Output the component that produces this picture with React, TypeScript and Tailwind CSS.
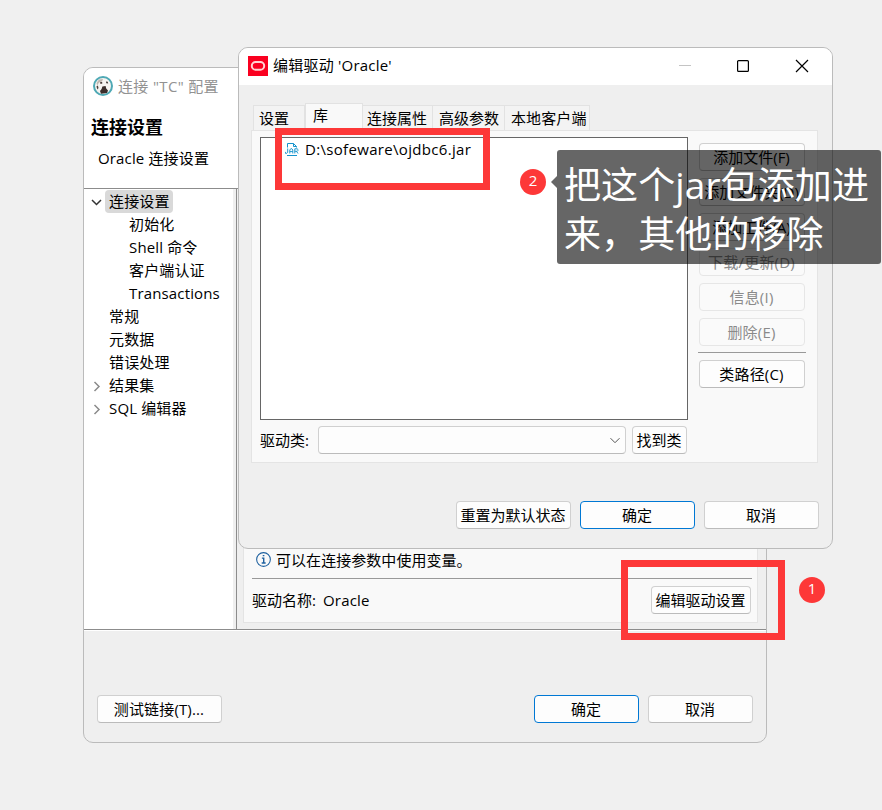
import React from "react";

const font = "font-['Open_Sans','Noto_Sans_CJK_SC',sans-serif]";

function Button({ children, className = "", variant = "normal" }: { children: React.ReactNode; className?: string; variant?: "normal" | "primary" | "disabled" }) {
  const look =
    variant === "primary"
      ? "border-[#0078d4] bg-[#fdfdfd] text-black"
      : variant === "disabled"
        ? "border-[#e6e6e6] bg-[#fafafa] text-[#8a8a8a]"
        : "border-[#d0d0d0] border-b-[#bbbbbb] bg-[#fdfdfd] text-black";
  return (
    <button className={`flex h-7 shrink-0 items-center justify-center whitespace-nowrap rounded border pr-px text-[15px] leading-none ${look} ${className}`}>
      {children}
    </button>
  );
}

function BeaverIcon() {
  return (
    <svg width="20" height="20" viewBox="0 0 20 20" className="shrink-0">
      <circle cx="10" cy="10" r="9" fill="#f6f3f0" stroke="#4fa9b5" strokeWidth="2" />
      <path d="M3.5 7 L6 3.6 L10 3 L9 5.6 L6 6.5 L4.2 9.6Z" fill="#c0b7b0" />
      <path d="M7.2 6h2v1.8h-2zM13 5.4l1.8.4.4 1.8-2-.4zM3.4 10.6l1.5-1.2.6 2.6-1 1.6z" fill="#4b3e3a" />
      <path d="M9.4 10.6 L12.6 10 L13.2 12.5 L15 14.5 L14 17 L8 17.8 L7 15 L8.6 13Z" fill="#3b2d2b" />
    </svg>
  );
}

function JarIcon() {
  return (
    <svg width="14" height="15" viewBox="0 0 14 15" className="shrink-0" fill="none" stroke="#1593cc">
      <path d="M2.5 5.5V1.5H8.5L11.5 4.5V5.5M8.5 1.5V4.5H11.5M2 13.5H12" />
      <path strokeWidth=".95" d="M2.7 6.5V10.3L1.8 11.3H.4V9.9M4.8 11.5V8L5.8 6.7H6.8L7.8 8V11.5M4.8 9.6H7.8M9.8 11.5V6.8H12.2L12.9 7.4V8.6L12.2 9.3H9.8M11.5 9.3L13 11.5" />
    </svg>
  );
}

function Chevron({ open }: { open: boolean }) {
  return (
    <svg width="12" height="12" viewBox="0 0 12 12" className="shrink-0" fill="none" strokeWidth="1.5">
      {open ? <path d="M1 4 L5.5 8.5 L10 4" stroke="#333" /> : <path d="M3.5 2 L8 6.5 L3.5 11" stroke="#8b8b8b" />}
    </svg>
  );
}

const tree: { label: string; child?: boolean; open?: boolean; selected?: boolean }[] = [
  { label: "连接设置", open: true, selected: true },
  { label: "初始化", child: true },
  { label: "Shell 命令", child: true },
  { label: "客户端认证", child: true },
  { label: "Transactions", child: true },
  { label: "常规" },
  { label: "元数据" },
  { label: "错误处理" },
  { label: "结果集", open: false },
  { label: "SQL 编辑器", open: false },
];

function ConnectionWindow() {
  return (
    <section className="absolute left-[83px] top-[67px] flex h-[676px] w-[684px] flex-col overflow-hidden rounded-[10px] border border-[#bbbbbb] bg-[#efefef]">
      <header className="h-[121px] shrink-0 border-b border-[#8c8c8c] bg-white">
        <div className="flex h-9 items-center gap-[5px] pl-[9px] text-[15px] text-[#929292]">
          <BeaverIcon />
          <span className="tracking-[0.35px]">连接 "TC" 配置</span>
        </div>
        <h1 className="mt-[11px] pl-[7px] text-[18px] font-bold leading-6">连接设置</h1>
        <p className="mt-2 pl-[14px] leading-[22px] tracking-[0.15px]">Oracle 连接设置</p>
      </header>
      <div className="flex h-[441px] shrink-0 border-b border-[#8c8c8c]">
        <nav className="w-[149px] shrink-0 bg-white pt-px tracking-[0.15px]">
          {tree.map((item) => (
            <div key={item.label} className={`flex h-[23px] items-center ${item.child ? "pl-[42px]" : "pl-[7px]"}`}>
              {!item.child && <span className="flex w-[14px]">{item.open !== undefined && <Chevron open={item.open} />}</span>}
              <span className={`flex h-[23px] items-center whitespace-nowrap rounded-sm ${item.selected ? "w-[68px] bg-[#d9d9d9] pl-1" : item.child ? "pl-[3px]" : "pl-1"}`}>{item.label}</span>
            </div>
          ))}
        </nav>
        <div className="w-[3px]" />
        <div className="w-px bg-[#8c8c8c]" />
        <div className="flex-1 pb-1.5 pl-1.5 pr-2">
          <div className="flex h-full flex-col justify-end border border-[#e4e4e4] bg-[#f9f9f9] pb-2 pl-2 pr-[5px]">
            <div className="flex h-9 items-center gap-[5px] border-b border-[#999999] pl-1">
              <svg width="15" height="15" viewBox="0 0 14 14" className="-mt-0.5" fill="none" stroke="#1d609f">
                <circle cx="7" cy="7" r="6.4" strokeWidth="1" />
                <path d="M5.5 5.7H7.2V10.2M5.3 10.2H9M6.3 3.4H7.8" strokeWidth="1.3" />
              </svg>
              <span className="tracking-[0.05px]">可以在连接参数中使用变量。</span>
            </div>
            <div className="mt-[7px] flex items-center">
              <span className="whitespace-pre">驱动名称:</span>
              <span className="ml-[7px] tracking-[0.2px]">Oracle</span>
              <Button className="ml-auto mr-px w-[100px]">编辑驱动设置</Button>
            </div>
          </div>
        </div>
      </div>
      <footer className="flex border-t border-white pl-[13px] pr-[13px] pt-16">
        <Button className="w-[125px] tracking-[0.15px]">测试链接(T)...</Button>
        <Button variant="primary" className="ml-auto w-[105px]">确定</Button>
        <Button className="ml-[9px] w-[105px]">取消</Button>
      </footer>
    </section>
  );
}

function DriverWindow() {
  return (
    <section className="absolute left-[238px] top-[47px] flex h-[502px] w-[595px] flex-col overflow-hidden rounded-[10px] border border-[#bbbbbb] bg-[#efefef]">
      <header className="flex h-[37px] shrink-0 items-center bg-white pb-0.5 pl-[9px]">
        <svg width="20" height="20" viewBox="0 0 20 20">
          <path fill="#fa0020" d="M0 0h20v20H0z" />
          <rect x="3.8" y="6.1" width="12.4" height="7.6" rx="3.8" fill="none" stroke="#ffd3d3" strokeWidth="2" />
        </svg>
        <span className="ml-[5px] tracking-[0.22px]">编辑驱动 'Oracle'</span>
        <svg className="ml-auto mr-[23px]" width="130" height="14" viewBox="0 0 130 14" fill="none">
          <path d="M0 6.5H12" stroke="#c4c4c4" />
          <rect x="58.6" y="1.6" width="10.8" height="10.8" rx="1" stroke="#000" strokeWidth="1.2" />
          <path d="M117 1L129 13M129 1L117 13" stroke="#000" strokeWidth="1.2" />
        </svg>
      </header>
      <div className="flex h-[45px] shrink-0 items-end pl-[14px] leading-none">
        <span className="flex h-[25px] w-[52px] items-center border border-b-0 border-[#e2e2e2] bg-[#f3f3f3] pl-[5px]">设置</span>
        <span className="flex h-[27px] w-[58px] items-center border border-b-0 border-[#e2e2e2] bg-[#f9f9f9] pb-[3px] pl-[7px]">库</span>
        <span className="flex h-[25px] w-[70px] items-center border-r border-t border-[#e2e2e2] bg-[#f3f3f3] pl-1">连接属性</span>
        <span className="flex h-[25px] w-[72px] items-center border-r border-t border-[#e2e2e2] bg-[#f3f3f3] pl-1.5">高级参数</span>
        <span className="flex h-[25px] w-[85px] items-center border-r border-t border-[#e2e2e2] bg-[#f3f3f3] pl-1.5 tracking-[0.1px]">本地客户端</span>
      </div>
      <div className="ml-3 flex h-[333px] w-[567px] shrink-0 flex-col border border-[#e4e4e4] bg-[#f9f9f9] pl-2 pt-1.5">
        <div className="flex">
          <div className="h-[283px] w-[428px] border border-[#666666] bg-white">
            <div className="flex h-[22px] items-center gap-[6px] pl-6">
              <JarIcon />
              <span className="whitespace-nowrap tracking-[0.32px]">D:\sofeware\ojdbc6.jar</span>
            </div>
          </div>
          <div className="ml-[11px] flex w-[106px] flex-col gap-[7px] pt-1.5">
            <Button>添加文件(F)</Button>
            <Button>添加文件夹(D)</Button>
            <Button>添加工件(A)</Button>
            <Button variant="disabled" className="tracking-[0.2px]">下载/更新(D)</Button>
            <Button variant="disabled" className="tracking-[0.2px]">信息(I)</Button>
            <Button variant="disabled" className="tracking-[0.2px]">删除(E)</Button>
            <div className="-mx-px -mt-px h-px bg-[#999999]" />
            <Button className="tracking-[0.2px]">类路径(C)</Button>
          </div>
        </div>
        <div className="mt-1.5 flex items-center">
          <span className="w-[58px]">驱动类:</span>
          <div className="flex h-7 w-[308px] items-center justify-end rounded-sm border border-[#d0d0d0] border-b-[#bbbbbb] bg-[#fdfdfd] pr-[5px]">
            <svg width="10" height="7" viewBox="0 0 10 7" fill="none" stroke="#555">
              <path d="M.5 1.2L5 5.7L9.5 1.2" />
            </svg>
          </div>
          <Button className="ml-1.5 w-[55px]">找到类</Button>
        </div>
      </div>
      <footer className="mt-[38px] flex justify-end gap-[9px] pr-[13px]">
        <Button className="w-[115px]">重置为默认状态</Button>
        <Button variant="primary" className="w-[115px]">确定</Button>
        <Button className="w-[115px]">取消</Button>
      </footer>
    </section>
  );
}

function Badge({ n, className }: { n: number; className: string }) {
  return <span className={`absolute flex size-[26px] items-center justify-center rounded-full bg-[#fd3838] pb-[3px] text-[15px] leading-none text-white ${className}`}>{n}</span>;
}

export default function App() {
  return (
    <main className={`relative h-[810px] w-[882px] overflow-hidden bg-[#f0f0f0] text-[15px] text-black ${font}`}>
      <ConnectionWindow />
      <DriverWindow />
      <div className="absolute left-[275px] top-[128px] h-[62px] w-[215px] border-[7px] border-[#fd3838]" />
      <div className="absolute left-[621px] top-[560px] h-[80px] w-[164px] border-[7px] border-[#fd3838]" />
      <Badge n={2} className="left-[520px] top-[169px]" />
      <Badge n={1} className="left-[799px] top-[577px]" />
      <svg className="absolute left-[551px] top-[176px]" width="6" height="12" viewBox="0 0 6 12">
        <path d="M6 0V12L0 6Z" fill="#000" fillOpacity=".6" />
      </svg>
      <div className="absolute left-[557px] top-[150px] h-[114px] w-[324px] whitespace-nowrap rounded-[3px] bg-black/60 pl-[7px] pt-[10px] text-[37px] leading-[49px] text-white">
        <div className="tracking-[0.1px]">把这个jar包添加进</div>
        <div className="tracking-[0.1px]">来，其他的移除</div>
      </div>
    </main>
  );
}
